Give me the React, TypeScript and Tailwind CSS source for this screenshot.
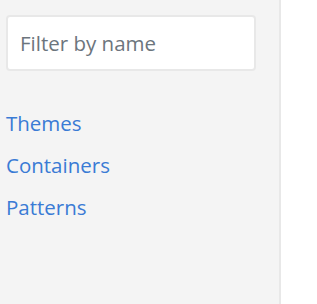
export default function App() {
  return (
    <div className="flex h-[304px] w-[317px] bg-white" style={{ fontFamily: '"Open Sans", "Noto Sans", sans-serif' }}>
      <div className="flex h-full w-[281px] flex-col border-r-2 border-[#e8e8e8] bg-[#f4f4f4] pl-[6px] pr-[24px] pt-[15px]">
        <input
          placeholder="Filter by name"
          className="h-[56px] w-[250px] rounded-[4px] border-2 border-[#e8e8e8] bg-white px-[12px] text-[20.5px] text-[#495057] placeholder:text-[#6c757d] outline-none"
        />
        <div className="mt-[37px] flex flex-col gap-[12px] text-[20.5px] leading-[30px] text-[#3a7bd5]">
          <a>Themes</a>
          <a>Containers</a>
          <a>Patterns</a>
        </div>
      </div>
      <div className="flex-1" />
    </div>
  );
}
